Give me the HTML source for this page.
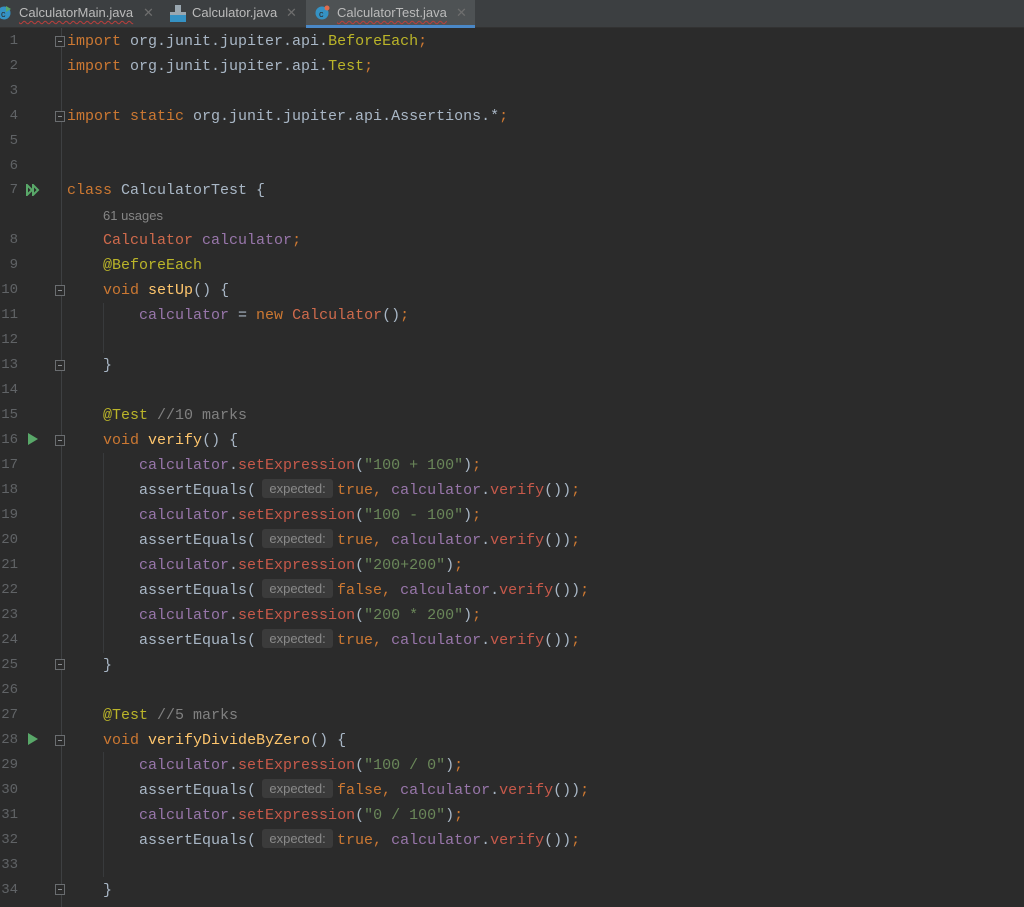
<!DOCTYPE html>
<html><head><meta charset="utf-8"><style>
*{margin:0;padding:0;box-sizing:border-box}
body{width:1024px;height:907px;background:#2b2b2b;overflow:hidden;position:relative;font-family:"Liberation Mono",monospace;font-size:15px;color:#a9b7c6}
.tabs{position:absolute;left:0;top:0;width:1024px;height:28px;background:#3c3f41;border-bottom:1px solid #323232}
.tab{position:absolute;top:0;height:28px;font-family:"Liberation Sans",sans-serif;font-size:13px;color:#bbbbbb;line-height:26px}
.tab .x{color:#6e6e6e;margin-left:8px;font-size:13px}
.u{text-decoration:underline wavy #bc3f3c;text-decoration-thickness:1px;text-underline-offset:3px}
.ln{position:absolute;left:0;width:18px;text-align:right;color:#606366;font-size:14px;line-height:25px;height:25px}
.row{position:absolute;left:67px;white-space:pre;line-height:25px;height:25px}
.k{color:#cc7832}.a{color:#bbb529}.s{color:#6a8759}.f{color:#9876aa}.c{color:#cf6a4c}.m{color:#ffc66d}.r{color:#c7594a}.g{color:#808080}
.h{display:inline-block;width:71px;text-align:center;background:#3b3b3b;color:#8a8a8a;font-family:"Liberation Sans",sans-serif;font-size:13px;line-height:19px;border-radius:3px;margin-left:-3px;margin-right:4px;vertical-align:1px}
.gl{position:absolute;left:61px;top:28px;width:1px;height:879px;background:#3e4042}
.fold{position:absolute;left:55px;width:10px;height:11px;border:1px solid #6a6d70;background:#2b2b2b}
.fold:after{content:"";position:absolute;left:2px;top:4px;width:4px;height:1px;background:#8a8d90}
.ig{position:absolute;width:1px;background:#383a3c}
</style></head><body>
<div class="tabs">
 <div class="tab" style="left:0;width:160px"><svg style="position:absolute;left:-3px;top:5px" width="16" height="16"><circle cx="7" cy="8" r="6.5" fill="#3592c4"/><text x="4" y="12" font-size="9" fill="#2b2b2b" font-family="Liberation Sans">c</text><path d="M9 1l5 3-5 3z" fill="#59a869"/></svg><span style="position:absolute;left:19px" class="u">CalculatorMain.java</span><span class="x" style="position:absolute;left:143px;margin:0">✕</span></div>
 <div class="tab" style="left:165px;width:140px"><svg style="position:absolute;left:5px;top:5px" width="16" height="17"><rect x="5" y="0" width="6" height="7" fill="#9aa7b0"/><rect x="0" y="7" width="16" height="3" fill="#9aa7b0"/><rect x="0" y="10" width="16" height="7" fill="#3592c4"/></svg><span style="position:absolute;left:27px">Calculator.java</span><span class="x" style="position:absolute;left:121px;margin:0">✕</span></div>
 <div class="tab" style="left:306px;width:169px;background:#4e5254;border-bottom:3px solid #4a88c7"><svg style="position:absolute;left:9px;top:5px" width="16" height="16"><circle cx="7" cy="8" r="6.5" fill="#3592c4"/><text x="4" y="12" font-size="9" fill="#2b2b2b" font-family="Liberation Sans">c</text><circle cx="12" cy="3" r="2.5" fill="#e06c4c"/></svg><span style="position:absolute;left:31px" class="u">CalculatorTest.java</span><span class="x" style="position:absolute;left:150px;margin:0">✕</span></div>
</div>
<div class="gl"></div>
<div class="ig" style="left:103px;top:303px;height:50px"></div>
<div class="ig" style="left:103px;top:453px;height:200px"></div>
<div class="ig" style="left:103px;top:752px;height:125px"></div>

<div class="ln" style="top:29px">1</div><div class="ln" style="top:54px">2</div><div class="ln" style="top:79px">3</div><div class="ln" style="top:104px">4</div><div class="ln" style="top:129px">5</div><div class="ln" style="top:154px">6</div><div class="ln" style="top:178px">7</div>
<div class="ln" style="top:228px">8</div><div class="ln" style="top:253px">9</div><div class="ln" style="top:278px">10</div><div class="ln" style="top:303px">11</div><div class="ln" style="top:328px">12</div><div class="ln" style="top:353px">13</div><div class="ln" style="top:378px">14</div><div class="ln" style="top:403px">15</div><div class="ln" style="top:428px">16</div><div class="ln" style="top:453px">17</div><div class="ln" style="top:478px">18</div><div class="ln" style="top:503px">19</div><div class="ln" style="top:528px">20</div><div class="ln" style="top:553px">21</div><div class="ln" style="top:578px">22</div><div class="ln" style="top:603px">23</div><div class="ln" style="top:628px">24</div><div class="ln" style="top:653px">25</div><div class="ln" style="top:678px">26</div><div class="ln" style="top:703px">27</div><div class="ln" style="top:728px">28</div><div class="ln" style="top:753px">29</div><div class="ln" style="top:778px">30</div><div class="ln" style="top:803px">31</div><div class="ln" style="top:828px">32</div><div class="ln" style="top:853px">33</div><div class="ln" style="top:878px">34</div>

<svg style="position:absolute;left:26px;top:184px" width="14" height="12"><path d="M1 1l5 5-5 5zM7 1l5 5-5 5z" fill="none" stroke="#59a869" stroke-width="2"/></svg>
<svg style="position:absolute;left:27px;top:433px" width="12" height="12"><path d="M1 0l10 6-10 6z" fill="#59a869"/></svg>
<svg style="position:absolute;left:27px;top:733px" width="12" height="12"><path d="M1 0l10 6-10 6z" fill="#59a869"/></svg>

<div class="fold" style="top:36px"></div><div class="fold" style="top:111px"></div><div class="fold" style="top:285px"></div><div class="fold" style="top:360px"></div><div class="fold" style="top:435px"></div><div class="fold" style="top:659px"></div><div class="fold" style="top:735px"></div><div class="fold" style="top:884px"></div>

<div class="row" style="top:29px"><span class="k">import</span> org.junit.jupiter.api.<span class="a">BeforeEach</span><span class="k">;</span></div>
<div class="row" style="top:54px"><span class="k">import</span> org.junit.jupiter.api.<span class="a">Test</span><span class="k">;</span></div>
<div class="row" style="top:104px"><span class="k">import static</span> org.junit.jupiter.api.Assertions.*<span class="k">;</span></div>
<div class="row" style="top:178px"><span class="k">class</span> CalculatorTest {</div>
<div class="row" style="top:203px;left:103px;font-family:'Liberation Sans',sans-serif;font-size:13px;color:#868686">61 usages</div>
<div class="row" style="top:228px">    <span class="c">Calculator</span> <span class="f">calculator</span><span class="k">;</span></div>
<div class="row" style="top:253px">    <span class="a">@BeforeEach</span></div>
<div class="row" style="top:278px">    <span class="k">void</span> <span class="m">setUp</span>() {</div>
<div class="row" style="top:303px">        <span class="f">calculator</span> = <span class="k">new</span> <span class="c">Calculator</span>()<span class="k">;</span></div>
<div class="row" style="top:353px">    }</div>
<div class="row" style="top:403px">    <span class="a">@Test</span> <span class="g">//10 marks</span></div>
<div class="row" style="top:428px">    <span class="k">void</span> <span class="m">verify</span>() {</div>
<div class="row" style="top:453px">        <span class="f">calculator</span>.<span class="r">setExpression</span>(<span class="s">"100 + 100"</span>)<span class="k">;</span></div>
<div class="row" style="top:478px">        assertEquals( <span class="h">expected:</span><span class="k">true,</span> <span class="f">calculator</span>.<span class="r">verify</span>())<span class="k">;</span></div>
<div class="row" style="top:503px">        <span class="f">calculator</span>.<span class="r">setExpression</span>(<span class="s">"100 - 100"</span>)<span class="k">;</span></div>
<div class="row" style="top:528px">        assertEquals( <span class="h">expected:</span><span class="k">true,</span> <span class="f">calculator</span>.<span class="r">verify</span>())<span class="k">;</span></div>
<div class="row" style="top:553px">        <span class="f">calculator</span>.<span class="r">setExpression</span>(<span class="s">"200+200"</span>)<span class="k">;</span></div>
<div class="row" style="top:578px">        assertEquals( <span class="h">expected:</span><span class="k">false,</span> <span class="f">calculator</span>.<span class="r">verify</span>())<span class="k">;</span></div>
<div class="row" style="top:603px">        <span class="f">calculator</span>.<span class="r">setExpression</span>(<span class="s">"200 * 200"</span>)<span class="k">;</span></div>
<div class="row" style="top:628px">        assertEquals( <span class="h">expected:</span><span class="k">true,</span> <span class="f">calculator</span>.<span class="r">verify</span>())<span class="k">;</span></div>
<div class="row" style="top:653px">    }</div>
<div class="row" style="top:703px">    <span class="a">@Test</span> <span class="g">//5 marks</span></div>
<div class="row" style="top:728px">    <span class="k">void</span> <span class="m">verifyDivideByZero</span>() {</div>
<div class="row" style="top:753px">        <span class="f">calculator</span>.<span class="r">setExpression</span>(<span class="s">"100 / 0"</span>)<span class="k">;</span></div>
<div class="row" style="top:778px">        assertEquals( <span class="h">expected:</span><span class="k">false,</span> <span class="f">calculator</span>.<span class="r">verify</span>())<span class="k">;</span></div>
<div class="row" style="top:803px">        <span class="f">calculator</span>.<span class="r">setExpression</span>(<span class="s">"0 / 100"</span>)<span class="k">;</span></div>
<div class="row" style="top:828px">        assertEquals( <span class="h">expected:</span><span class="k">true,</span> <span class="f">calculator</span>.<span class="r">verify</span>())<span class="k">;</span></div>
<div class="row" style="top:878px">    }</div>
</body></html>
